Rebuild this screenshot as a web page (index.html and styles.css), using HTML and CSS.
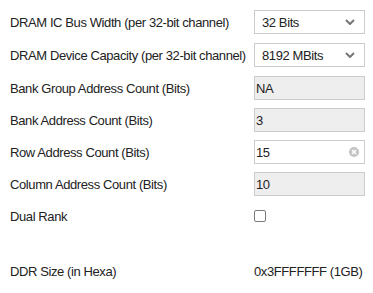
FILE: index.html
```html
<!DOCTYPE html>
<html>

<head>
    <meta charset="utf-8">
    <title>DDR Settings</title>
    <link rel="stylesheet" href="styles.css">
</head>

<body>
    <div class="ddr-form">
        <div class="row row-wide">
            <label>DRAM IC Bus Width (per 32-bit channel)</label>
            <div class="field select">
                <span>32 Bits</span>
                <svg class="chevron" width="10" height="6" viewBox="0 0 10 6"><path d="M1 1 L5 5 L9 1" fill="none" stroke="#777" stroke-width="2"/></svg>
            </div>
        </div>
        <div class="row row-wide">
            <label>DRAM Device Capacity (per 32-bit channel)</label>
            <div class="field select">
                <span>8192 MBits</span>
                <svg class="chevron" width="10" height="6" viewBox="0 0 10 6"><path d="M1 1 L5 5 L9 1" fill="none" stroke="#777" stroke-width="2"/></svg>
            </div>
        </div>
        <div class="row">
            <label>Bank Group Address Count (Bits)</label>
            <div class="field input disabled"><span>NA</span></div>
        </div>
        <div class="row">
            <label>Bank Address Count (Bits)</label>
            <div class="field input disabled"><span>3</span></div>
        </div>
        <div class="row">
            <label>Row Address Count (Bits)</label>
            <div class="field input">
                <span>15</span>
                <svg class="clear" width="10" height="10" viewBox="0 0 10 10"><circle cx="5" cy="5" r="5" fill="#c4c4c4"/><path d="M3 3 L7 7 M7 3 L3 7" stroke="#fff" stroke-width="1.6"/></svg>
            </div>
        </div>
        <div class="row">
            <label>Column Address Count (Bits)</label>
            <div class="field input disabled"><span>10</span></div>
        </div>
        <div class="row">
            <label>Dual Rank</label>
            <div class="check-cell"><span class="checkbox"></span></div>
        </div>
        <div class="row row-total">
            <label>DDR Size (in Hexa)</label>
            <div class="value">0x3FFFFFFF (1GB)</div>
        </div>
    </div>
</body>

</html>
```

FILE: styles.css
```css
* {
    margin: 0;
    padding: 0;
    box-sizing: border-box;
}

body {
    background: #fff;
    font-family: "Liberation Sans", Arial, sans-serif;
    font-size: 13px;
    letter-spacing: -0.4px;
    color: #222;
}

.ddr-form {
    padding: 10px 0 0 10px;
}

.row {
    display: flex;
    align-items: center;
    height: 24px;
    margin-bottom: 8px;
}

.row-wide {
    margin-bottom: 9px;
}

.row label {
    flex: none;
    width: 244px;
    white-space: nowrap;
}

.field {
    width: 111px;
    height: 24px;
    border: 1px solid #ccc;
    background: #fff;
    display: flex;
    align-items: center;
    justify-content: space-between;
}

.select {
    padding: 0 9px 0 7px;
}

.input {
    padding: 0 5px 0 1px;
}

.disabled {
    background: #eeeeee;
}

.check-cell {
    width: 111px;
}

.checkbox {
    display: block;
    width: 12px;
    height: 12px;
    border: 1px solid #7a7a7a;
    border-radius: 2px;
}

.row-total {
    margin-top: 31px;
}

.value {
    width: 111px;
    white-space: nowrap;
}
```
